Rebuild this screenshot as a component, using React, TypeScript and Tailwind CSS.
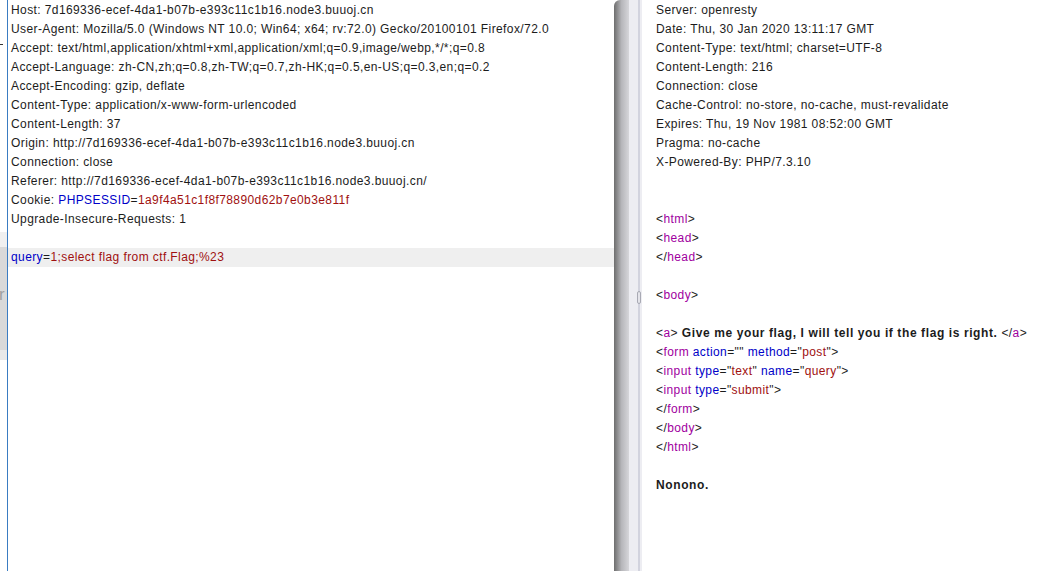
import React from "react";

const T = "text-[#a000a0]"; // tag name
const A = "text-[#0000c8]"; // attribute / param name
const V = "text-[#a01010]"; // value

function Tag({ name, close = false, children }: { name: string; close?: boolean; children?: React.ReactNode }) {
  return (
    <>
      {close ? "</" : "<"}
      <span className={T}>{name}</span>
      {children}
      {">"}
    </>
  );
}

function Attr({ name, value }: { name: string; value: string }) {
  return (
    <>
      {" "}
      <span className={A}>{name}</span>="<span className={V}>{value}</span>"
    </>
  );
}

const requestHeaders = [
  "Host: 7d169336-ecef-4da1-b07b-e393c11c1b16.node3.buuoj.cn",
  "User-Agent: Mozilla/5.0 (Windows NT 10.0; Win64; x64; rv:72.0) Gecko/20100101 Firefox/72.0",
  "Accept: text/html,application/xhtml+xml,application/xml;q=0.9,image/webp,*/*;q=0.8",
  "Accept-Language: zh-CN,zh;q=0.8,zh-TW;q=0.7,zh-HK;q=0.5,en-US;q=0.3,en;q=0.2",
  "Accept-Encoding: gzip, deflate",
  "Content-Type: application/x-www-form-urlencoded",
  "Content-Length: 37",
  "Origin: http://7d169336-ecef-4da1-b07b-e393c11c1b16.node3.buuoj.cn",
  "Connection: close",
  "Referer: http://7d169336-ecef-4da1-b07b-e393c11c1b16.node3.buuoj.cn/",
];

const responseHeaders = [
  "Server: openresty",
  "Date: Thu, 30 Jan 2020 13:11:17 GMT",
  "Content-Type: text/html; charset=UTF-8",
  "Content-Length: 216",
  "Connection: close",
  "Cache-Control: no-store, no-cache, must-revalidate",
  "Expires: Thu, 19 Nov 1981 08:52:00 GMT",
  "Pragma: no-cache",
  "X-Powered-By: PHP/7.3.10",
];

function Line({ children, className = "" }: { children?: React.ReactNode; className?: string }) {
  return <div className={`h-[19px] whitespace-pre ${className}`}>{children ?? " "}</div>;
}

export default function App() {
  return (
    <div
      className="flex h-[571px] w-[1037px] overflow-hidden bg-white text-[12px] leading-[19px] tracking-[0.4px] text-[#1c1c1c]"
      style={{ fontFamily: '"Liberation Sans", Arial, sans-serif' }}
    >
      {/* 왼쪽 가장자리 */}
      <div className="relative w-[7px] shrink-0 overflow-hidden bg-white">
        <div className="absolute left-0 top-[44px] h-px w-[3px] bg-[#333]" />
        <div className="absolute left-0 top-[232px] h-[15px] w-[7px] bg-[#f0f0f0]" />
        <div className="absolute left-0 top-[247px] h-[103px] w-[7px] bg-[#d9d9d9]">
          <span className="absolute -left-px top-[38px] text-[17px] leading-[20px] text-[#a0a0a0]">r</span>
        </div>
        <div className="absolute left-0 top-[350px] h-[10px] w-[7px] bg-[#e9e9e9]" />
      </div>
      <div className="w-px shrink-0 bg-[#3a7cc2]" />

      {/* 요청 */}
      <div className="w-[606px] shrink-0 overflow-hidden pt-px">
        {requestHeaders.map((h) => (
          <Line key={h} className="pl-[3px]">{h}</Line>
        ))}
        <Line className="pl-[3px]">
          Cookie: <span className={A}>PHPSESSID</span>=
          <span className={V}>1a9f4a51c1f8f78890d62b7e0b3e811f</span>
        </Line>
        <Line className="pl-[3px]">Upgrade-Insecure-Requests: 1</Line>
        <Line />
        <Line className="bg-[#efefef] pl-[3px]">
          <span className={A}>query</span>=<span className={V}>1;select flag from ctf.Flag;%23</span>
        </Line>
      </div>

      {/* 분할선 */}
      <div className="w-[15px] shrink-0 rounded-tl-[6px] bg-gradient-to-r from-[#6e6e6e] via-[#b6b6ba] to-[#d6d6da]" />
      <div className="relative w-[13px] shrink-0 bg-[#ededf2]">
        <div className="absolute right-[2px] top-0 h-full w-[2px] bg-[#d2d3de]" />
        <div className="absolute right-[1px] top-[291px] h-[13px] w-[4px] rounded-sm border border-[#a9aab4] bg-[#e4e4ea]" />
      </div>

      {/* 응답 */}
      <div className="flex-1 overflow-hidden pl-[14px] pt-px">
        {responseHeaders.map((h) => (
          <Line key={h}>{h}</Line>
        ))}
        <Line />
        <Line />
        <Line><Tag name="html" /></Line>
        <Line><Tag name="head" /></Line>
        <Line><Tag name="head" close /></Line>
        <Line />
        <Line><Tag name="body" /></Line>
        <Line />
        <Line>
          <Tag name="a" />
          <b className="tracking-[0.6px]"> Give me your flag, I will tell you if the flag is right. </b>
          <Tag name="a" close />
        </Line>
        <Line>
          <Tag name="form">
            <Attr name="action" value="" />
            <Attr name="method" value="post" />
          </Tag>
        </Line>
        <Line>
          <Tag name="input">
            <Attr name="type" value="text" />
            <Attr name="name" value="query" />
          </Tag>
        </Line>
        <Line>
          <Tag name="input">
            <Attr name="type" value="submit" />
          </Tag>
        </Line>
        <Line><Tag name="form" close /></Line>
        <Line><Tag name="body" close /></Line>
        <Line><Tag name="html" close /></Line>
        <Line />
        <Line><b className="tracking-[0.6px]">Nonono.</b></Line>
      </div>
    </div>
  );
}
